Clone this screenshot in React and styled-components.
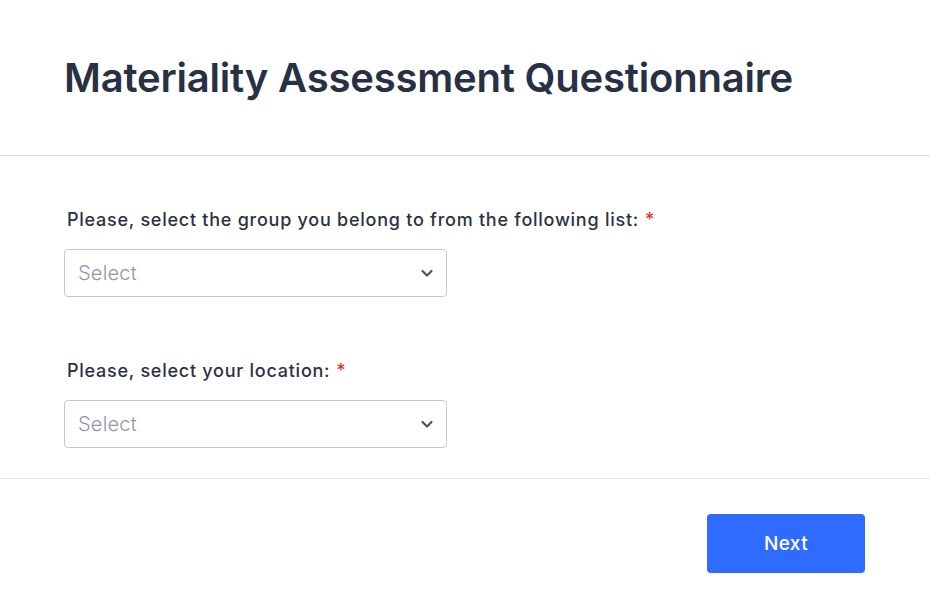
import styled, { createGlobalStyle } from "styled-components"

const GlobalStyle = createGlobalStyle`
  body {
    margin: 0;
    background: #ffffff;
    font-family: Inter, "Noto Sans", sans-serif;
  }
`

const Page = styled.div`
  display: flex;
  flex-direction: column;
  width: 930px;
  height: 608px;
  background: #fff;
`

const Header = styled.header`
  display: flex;
  align-items: center;
  height: 155px;
  padding: 0 64px;
  border-bottom: 1px solid #d9dbe3;
`

const Title = styled.h1`
  margin: 0;
  font-size: 40px;
  line-height: 48px;
  font-weight: 600;
  letter-spacing: -0.2px;
  color: #283044;
`

const Body = styled.main`
  display: flex;
  flex-direction: column;
  padding: 52px 64px 30px;
  border-bottom: 1px solid #e6e8ee;
`

const Field = styled.div`
  display: flex;
  flex-direction: column;
  gap: 17px;
  & + & {
    margin-top: 62px;
  }
`

const Label = styled.label`
  padding-left: 3px;
  font-size: 18px;
  line-height: 24px;
  font-weight: 500;
  letter-spacing: 0.75px;
  color: #2b3245;
`

const Required = styled.span`
  color: #e5322d;
  margin-left: 6px;
`

const SelectBox = styled.div`
  display: flex;
  align-items: center;
  justify-content: space-between;
  box-sizing: border-box;
  width: 383px;
  height: 48px;
  padding: 0 12px 0 13px;
  border: 1px solid #c5c9d4;
  border-radius: 4px;
  cursor: pointer;
`

const Placeholder = styled.span`
  font-size: 20px;
  font-weight: 300;
  letter-spacing: 0.2px;
  color: #8e96ab;
`

const Footer = styled.footer`
  display: flex;
  justify-content: flex-end;
  padding: 35px 65px 0;
`

const Button = styled.button`
  width: 158px;
  height: 59px;
  border: none;
  border-radius: 4px;
  background: #2f6bff;
  color: #fff;
  font-family: inherit;
  font-size: 19px;
  font-weight: 500;
  letter-spacing: 0.4px;
  cursor: pointer;
`

function Chevron() {
  return (
    <svg width="14" height="14" viewBox="0 0 14 14" fill="none">
      <path d="M2.5 5l4.5 4.5L11.5 5" stroke="#4b5266" strokeWidth="2.2" strokeLinecap="round" strokeLinejoin="round" />
    </svg>
  )
}

function SelectField({ label }) {
  return (
    <Field>
      <Label>
        {label}
        <Required>*</Required>
      </Label>
      <SelectBox>
        <Placeholder>Select</Placeholder>
        <Chevron />
      </SelectBox>
    </Field>
  )
}

export default function App() {
  return (
    <Page>
      <GlobalStyle />
      <Header>
        <Title>Materiality Assessment Questionnaire</Title>
      </Header>
      <Body>
        <SelectField label="Please, select the group you belong to from the following list:" />
        <SelectField label="Please, select your location:" />
      </Body>
      <Footer>
        <Button>Next</Button>
      </Footer>
    </Page>
  )
}
